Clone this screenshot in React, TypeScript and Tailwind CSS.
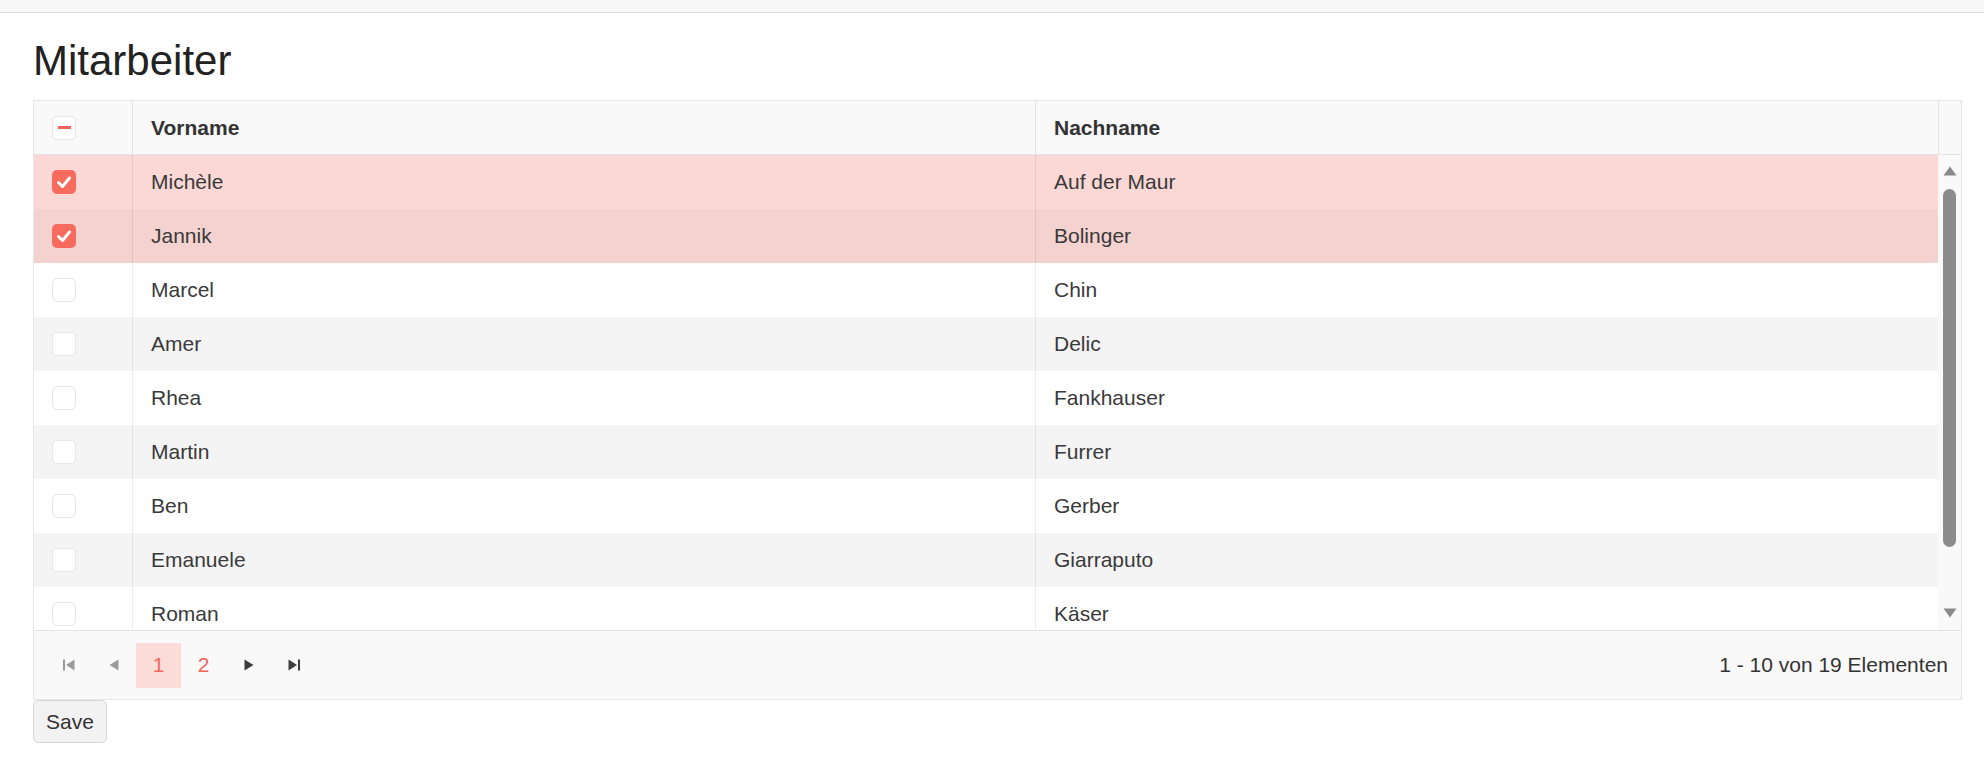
import React from 'react';

const employees = [
  { first: 'Michèle', last: 'Auf der Maur', checked: true },
  { first: 'Jannik', last: 'Bolinger', checked: true },
  { first: 'Marcel', last: 'Chin', checked: false },
  { first: 'Amer', last: 'Delic', checked: false },
  { first: 'Rhea', last: 'Fankhauser', checked: false },
  { first: 'Martin', last: 'Furrer', checked: false },
  { first: 'Ben', last: 'Gerber', checked: false },
  { first: 'Emanuele', last: 'Giarraputo', checked: false },
  { first: 'Roman', last: 'Käser', checked: false },
];

function Checkbox({ checked }: { checked: boolean }) {
  if (checked) {
    return (
      <span className="flex h-[24px] w-[24px] items-center justify-center rounded-[5px] bg-[#f76b5f]">
        <svg width="24" height="24" viewBox="0 0 24 24">
          <polyline points="6.5,12.5 10.5,16.5 17.5,8" fill="none" stroke="#fff" strokeWidth="3" strokeLinecap="round" strokeLinejoin="round" />
        </svg>
      </span>
    );
  }
  return <span className="block h-[24px] w-[24px] rounded-[5px] border border-[#e6e6e6] bg-white" />;
}

function PagerIcon({ kind, color }: { kind: 'first' | 'prev' | 'next' | 'last'; color: string }) {
  return (
    <svg width="12" height="12" viewBox="0 0 12 12" fill={color}>
      {kind === 'first' && (
        <>
          <rect x="0" y="0.5" width="2" height="11" />
          <polygon points="11.5,0.5 3,6 11.5,11.5" />
        </>
      )}
      {kind === 'prev' && <polygon points="10.5,0.5 1.5,6 10.5,11.5" />}
      {kind === 'next' && <polygon points="1.5,0.5 10.5,6 1.5,11.5" />}
      {kind === 'last' && (
        <>
          <polygon points="0.5,0.5 9,6 0.5,11.5" />
          <rect x="10" y="0.5" width="2" height="11" />
        </>
      )}
    </svg>
  );
}

export default function App() {
  return (
    <div className="min-h-[783px] bg-white text-[21px] text-[#3a3a3a]" style={{ fontFamily: '"Liberation Sans", Arial, sans-serif' }}>
      {/* top strip */}
      <div className="h-[13px] border-b border-[#dcdcdc] bg-[#f6f6f6]" />

      <div className="ml-[33px] w-[1929px]">
        <h1 className="mt-[25px] mb-[16px] text-[42px] leading-[46px] font-normal text-[#222]">Mitarbeiter</h1>

        <div className="border border-[#e6e6e6]">
          {/* header */}
          <div className="flex h-[54px] border-b border-[#e3e3e3] bg-[#f9f9f9] font-bold text-[#333]">
            <div className="flex w-[98px] items-center pl-[18px]">
              <span className="flex h-[24px] w-[24px] items-center justify-center rounded-[5px] border border-[#e6e6e6] bg-white">
                <span className="block h-[3px] w-[13px] bg-[#f2625a]" />
              </span>
            </div>
            <div className="flex w-[903px] items-center border-l border-[#e3e3e3] pl-[18px]">Vorname</div>
            <div className="flex w-[903px] items-center border-l border-[#e3e3e3] pl-[18px]">Nachname</div>
            <div className="flex-1 border-l border-[#e3e3e3]" />
          </div>

          {/* body */}
          <div className="flex h-[475px] overflow-hidden">
            <div className="w-[1904px]">
              {employees.map((e, i) => {
                const alt = i % 2 === 1;
                const bg = e.checked ? (alt ? 'bg-[#f4d2cf]' : 'bg-[#fbd8d5]') : alt ? 'bg-[#f4f4f4]' : 'bg-white';
                return (
                  <div key={e.first} className={`flex h-[54px] ${bg}`}>
                    <div className="flex w-[98px] items-center pl-[18px]">
                      <Checkbox checked={e.checked} />
                    </div>
                    <div className="flex w-[903px] items-center border-l border-black/[0.075] pl-[18px]">{e.first}</div>
                    <div className="flex w-[903px] items-center border-l border-black/[0.075] pl-[18px]">{e.last}</div>
                  </div>
                );
              })}
            </div>
            {/* scrollbar */}
            <div className="flex flex-1 flex-col items-center bg-[#f9f9f9]">
              <svg className="mt-[11px]" width="14" height="10" viewBox="0 0 14 10">
                <polygon points="7,0.5 13.5,9.5 0.5,9.5" fill="#8b8b8b" />
              </svg>
              <div className="mt-[13px] h-[358px] w-[13px] rounded-full bg-[#8c8c8c]" />
              <svg className="mt-[61px]" width="14" height="10" viewBox="0 0 14 10">
                <polygon points="0.5,0.5 13.5,0.5 7,9.5" fill="#8b8b8b" />
              </svg>
            </div>
          </div>

          {/* pager */}
          <div className="flex h-[69px] items-center justify-between border-t border-[#e3e3e3] bg-[#f9f9f9] pr-[13px] pl-[12px]">
            <div className="flex items-center">
              <span className="flex h-[45px] w-[45px] items-center justify-center">
                <PagerIcon kind="first" color="#9a9a9a" />
              </span>
              <span className="flex h-[45px] w-[45px] items-center justify-center">
                <PagerIcon kind="prev" color="#9a9a9a" />
              </span>
              <span className="flex h-[45px] w-[45px] items-center justify-center bg-[#fbdcd9] text-[#f06a62]">1</span>
              <span className="flex h-[45px] w-[45px] items-center justify-center text-[#f2625a]">2</span>
              <span className="flex h-[45px] w-[45px] items-center justify-center">
                <PagerIcon kind="next" color="#3d3d3d" />
              </span>
              <span className="flex h-[45px] w-[45px] items-center justify-center">
                <PagerIcon kind="last" color="#3d3d3d" />
              </span>
            </div>
            <span className="text-[#333]">1 - 10 von 19 Elementen</span>
          </div>
        </div>

        <button className="h-[43px] rounded-[5px] border border-[#d6d6d6] bg-[#f2f2f2] px-[12px] text-[21px] leading-[41px] text-[#333]">
          Save
        </button>
      </div>
    </div>
  );
}
